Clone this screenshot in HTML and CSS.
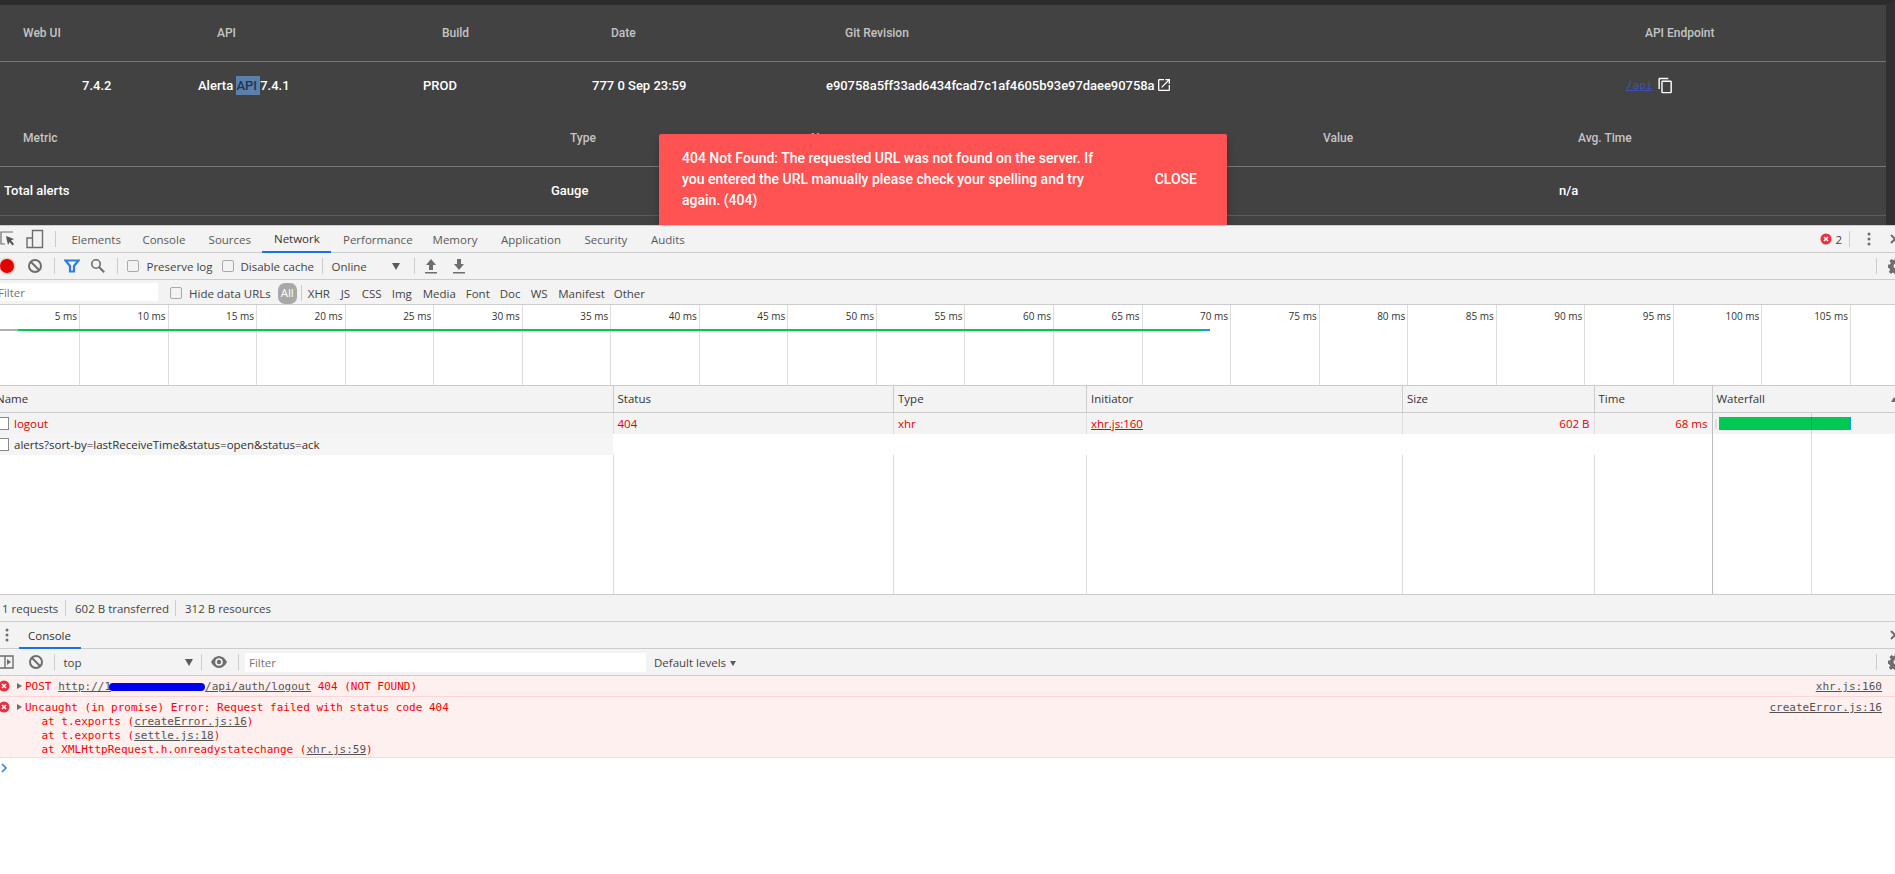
FILE: index.html
```html
<!DOCTYPE html>
<html lang="en">
  <head>
    <meta charset="UTF-8" />
    <meta name="viewport" content="width=device-width, initial-scale=1.0" />
    <title>Alerta About</title>
    <link rel="stylesheet" href="styles.css">
  </head>
  <body>
    <svg class="sprites" width="0" height="0">
      <symbol id="i-clear" viewBox="0 0 16 16">
        <circle cx="8" cy="8" r="6" fill="none" stroke="#6e6e6e" stroke-width="2" />
        <path d="M4 4l8 8" stroke="#6e6e6e" stroke-width="2" />
      </symbol>
      <symbol id="i-error" viewBox="0 0 12 12">
        <circle cx="6" cy="6" r="5.5" fill="#e8303f" />
        <path d="M4 4l4 4M8 4l-4 4" stroke="#fff" stroke-width="1.5" />
      </symbol>
      <symbol id="i-kebab" viewBox="0 0 6 16">
        <circle cx="3" cy="3" r="1.5" fill="#6e6e6e" />
        <circle cx="3" cy="8" r="1.5" fill="#6e6e6e" />
        <circle cx="3" cy="13" r="1.5" fill="#6e6e6e" />
      </symbol>
      <symbol id="i-gear" viewBox="0 0 16 16">
        <path fill="#6e6e6e" fill-rule="evenodd" d="M6.5 0h3l.4 2.2 1.3.6L13.1 1.5l2.1 2.1-1.3 1.9.6 1.3 2.2.4v3l-2.2.4-.6 1.3 1.3 1.9-2.1 2.1-1.9-1.3-1.3.6-.4 2.2h-3l-.4-2.2-1.3-.6-1.9 1.3-2.1-2.1 1.3-1.9-.6-1.3L0 9.700v-3l2.200-.4.6-1.300-1.300-1.900 2.100-2.100 1.900 1.300 1.300-.6zM8 5.500a2.500 2.500 0 1 0 0 5 2.500 2.500 0 0 0 0-5z" />
      </symbol>
      <symbol id="i-close" viewBox="0 0 10 10">
        <path d="M1 1l8 8M9 1l-8 8" stroke="#6e6e6e" stroke-width="2" fill="none" />
      </symbol>
    </svg>

    <main class="app">
      <div class="about-grid about-head">
        <div>Web UI</div>
        <div>API</div>
        <div>Build</div>
        <div>Date</div>
        <div>Git Revision</div>
        <div>API Endpoint</div>
      </div>
      <div class="about-grid about-row">
        <div class="first-value">7.4.2</div>
        <div>Alerta <span class="selected">API </span>7.4.1</div>
        <div>PROD</div>
        <div>777 0 Sep 23:59</div>
        <div class="with-icon">
          <span class="hash">e90758a5ff33ad6434fcad7c1af4605b93e97daee90758a</span>
          <svg class="md-icon" width="16" height="16" viewBox="0 0 24 24"><path fill="#fff" d="M14 3v2h3.590l-9.830 9.830 1.410 1.410L19 6.410V10h2V3M19 19H5V5h7V3H5a2 2 0 0 0-2 2v14a2 2 0 0 0 2 2h14a2 2 0 0 0 2-2v-7h-2v7z" /></svg>
        </div>
        <div class="with-icon">
          <a class="api-link" href="#">/api</a>
          <svg class="copy-icon" width="17" height="17" viewBox="0 0 24 24"><path fill="#fff" d="M16 1H4c-1.100 0-2 .9-2 2v14h2V3h12V1zm3 4H8c-1.100 0-2 .9-2 2v14c0 1.100.9 2 2 2h11c1.100 0 2-.9 2-2V7c0-1.100-.9-2-2-2zm0 16H8V7h11v14z" /></svg>
        </div>
      </div>

      <div class="metric-grid metric-head">
        <div>Metric</div>
        <div>Type</div>
        <div>Name</div>
        <div>Value</div>
        <div>Avg. Time</div>
      </div>
      <div class="metric-grid metric-row">
        <div>Total alerts</div>
        <div>Gauge</div>
        <div></div>
        <div></div>
        <div>n/a</div>
      </div>

      <div class="snackbar">
        <div class="snackbar-text">404 Not Found: The requested URL was not found on the server. If you entered the URL manually please check your spelling and try again. (404)</div>
        <div class="snackbar-close">CLOSE</div>
      </div>
    </main>

    <section class="devtools">
      <div class="tabbar">
        <svg class="inspect" width="16" height="16" viewBox="0 0 16 16">
          <path d="M13 1H1v12h4" fill="none" stroke="#6e6e6e" stroke-width="1.200" />
          <path d="M6 5l8 3-3 1.500 3 3.500-1.500 1.500-3-3.500L8 14z" fill="#555" />
        </svg>
        <svg class="device" width="18" height="20" viewBox="0 0 18 20">
          <path d="M6.500 1.500h10v17h-10zM1 9h5.500v9.500H1z" fill="none" stroke="#6e6e6e" stroke-width="1.400" />
        </svg>
        <span class="sep"></span>
        <div class="tabs">
          <span class="tab">Elements</span>
          <span class="tab">Console</span>
          <span class="tab">Sources</span>
          <span class="tab active">Network</span>
          <span class="tab">Performance</span>
          <span class="tab">Memory</span>
          <span class="tab">Application</span>
          <span class="tab">Security</span>
          <span class="tab">Audits</span>
        </div>
        <div class="tabbar-right">
          <svg width="12" height="12"><use href="#i-error" /></svg>
          <span class="err-count">2</span>
          <span class="sep"></span>
          <svg class="kebab" width="6" height="16"><use href="#i-kebab" /></svg>
          <svg class="close" width="10" height="10"><use href="#i-close" /></svg>
        </div>
      </div>

      <div class="net-toolbar">
        <span class="record"></span>
        <svg width="16" height="16"><use href="#i-clear" /></svg>
        <span class="sep"></span>
        <svg width="16" height="16" viewBox="0 0 16 16"><path d="M1.500 2.500h13L10 8v5.500H6V8z" fill="none" stroke="#2a7de1" stroke-width="2.200" /></svg>
        <svg width="16" height="16" viewBox="0 0 16 16"><circle cx="6" cy="6" r="4.200" fill="none" stroke="#6e6e6e" stroke-width="1.600" /><path d="M9.200 9.200l5 5" stroke="#6e6e6e" stroke-width="2" /></svg>
        <span class="sep"></span>
        <span class="check"></span>
        <span>Preserve log</span>
        <span class="check"></span>
        <span>Disable cache</span>
        <span class="sep"></span>
        <span>Online</span>
        <span class="caret"></span>
        <span class="sep"></span>
        <svg width="14" height="16" viewBox="0 0 14 16"><path d="M7 1l5 6H9v5H5V7H2zM1 14h12v1.500H1z" fill="#6e6e6e" /></svg>
        <svg width="14" height="16" viewBox="0 0 14 16"><path d="M7 12l5-6H9V1H5v5H2zM1 14h12v1.500H1z" fill="#6e6e6e" /></svg>
        <span></span>
        <span class="sep"></span>
        <svg class="gear" width="16" height="16"><use href="#i-gear" /></svg>
      </div>

      <div class="filter-bar">
        <div class="filter-input">Filter</div>
        <span class="check"></span>
        <span>Hide data URLs</span>
        <span class="pill">All</span>
        <span class="sep"></span>
        <div class="type-list">
          <span>XHR</span>
          <span>JS</span>
          <span>CSS</span>
          <span>Img</span>
          <span>Media</span>
          <span>Font</span>
          <span>Doc</span>
          <span>WS</span>
          <span>Manifest</span>
          <span>Other</span>
        </div>
      </div>

      <div class="timeline">
        <div class="tick first">5 ms</div>
        <div class="tick">10 ms</div>
        <div class="tick">15 ms</div>
        <div class="tick">20 ms</div>
        <div class="tick">25 ms</div>
        <div class="tick">30 ms</div>
        <div class="tick">35 ms</div>
        <div class="tick">40 ms</div>
        <div class="tick">45 ms</div>
        <div class="tick">50 ms</div>
        <div class="tick">55 ms</div>
        <div class="tick">60 ms</div>
        <div class="tick">65 ms</div>
        <div class="tick">70 ms</div>
        <div class="tick">75 ms</div>
        <div class="tick">80 ms</div>
        <div class="tick">85 ms</div>
        <div class="tick">90 ms</div>
        <div class="tick">95 ms</div>
        <div class="tick">100 ms</div>
        <div class="tick">105 ms</div>
        <div class="overview-bar">
          <span class="bar-wait"></span>
          <span class="bar-green"></span>
          <span class="bar-blue"></span>
        </div>
      </div>

      <div class="net-table">
        <div class="net-cols net-head">
          <div class="col-name">Name</div>
          <div>Status</div>
          <div>Type</div>
          <div>Initiator</div>
          <div>Size</div>
          <div>Time</div>
          <div>Waterfall<span class="sort-arrow"></span></div>
        </div>
        <div class="net-cols net-row failed">
          <div class="col-name"><span class="file-icon"></span>logout</div>
          <div>404</div>
          <div>xhr</div>
          <div><u>xhr.js:160</u></div>
          <div class="num">602 B</div>
          <div class="num">68 ms</div>
          <div class="waterfall"><span class="wf-wait"></span><span class="wf-green"></span><span class="wf-blue"></span></div>
        </div>
        <div class="net-cols net-row plain">
          <div class="col-name"><span class="file-icon"></span>alerts?sort-by=lastReceiveTime&amp;status=open&amp;status=ack</div>
          <div></div>
          <div></div>
          <div></div>
          <div></div>
          <div></div>
          <div class="waterfall"></div>
        </div>
        <div class="net-cols net-fill">
          <div class="col-name"></div>
          <div></div>
          <div></div>
          <div></div>
          <div></div>
          <div></div>
          <div class="waterfall"></div>
        </div>
      </div>

      <div class="status-bar">
        <span class="status-first">1 requests</span>
        <span class="sep"></span>
        <span>602 B transferred</span>
        <span class="sep"></span>
        <span>312 B resources</span>
      </div>

      <div class="drawer-tabs">
        <svg class="kebab" width="6" height="16"><use href="#i-kebab" /></svg>
        <span class="tab active drawer-tab">Console</span>
        <svg class="close" width="10" height="10"><use href="#i-close" /></svg>
      </div>

      <div class="console-toolbar">
        <svg width="14" height="14" viewBox="0 0 14 14"><path d="M-1 1h14v12H-1zM5 1v12" fill="none" stroke="#6e6e6e" stroke-width="1.400" /><path d="M7 4l4 3-4 3z" fill="#6e6e6e" /></svg>
        <svg width="16" height="16"><use href="#i-clear" /></svg>
        <span class="sep"></span>
        <span>top</span>
        <span class="caret"></span>
        <span class="sep"></span>
        <svg width="16" height="12" viewBox="0 0 16 12"><path d="M0 6c2-4 5-6 8-6s6 2 8 6c-2 4-5 6-8 6s-6-2-8-6z" fill="#6e6e6e" /><circle cx="8" cy="6" r="3.800" fill="#f3f3f3" /><circle cx="8" cy="6" r="2.200" fill="#6e6e6e" /></svg>
        <span class="sep"></span>
        <div class="console-filter">Filter</div>
        <span class="levels">Default levels<span class="caret small"></span></span>
        <span class="sep"></span>
        <svg class="gear" width="16" height="16"><use href="#i-gear" /></svg>
      </div>

      <div class="console">
        <div class="msg msg-one">
          <svg class="msg-icon" width="12" height="12"><use href="#i-error" /></svg>
          <span class="expand"></span>
          <div>POST <u class="src">http://1<span class="redact"></span>/api/auth/logout</u> 404 (NOT FOUND)</div>
          <u class="src msg-src">xhr.js:160</u>
        </div>
        <div class="msg msg-two">
          <svg class="msg-icon" width="12" height="12"><use href="#i-error" /></svg>
          <span class="expand"></span>
          <div>
            <div>Uncaught (in promise) Error: Request failed with status code 404</div>
            <div class="trace">at t.exports (<u class="src">createError.js:16</u>)</div>
            <div class="trace">at t.exports (<u class="src">settle.js:18</u>)</div>
            <div class="trace">at XMLHttpRequest.h.onreadystatechange (<u class="src">xhr.js:59</u>)</div>
          </div>
          <u class="src msg-src">createError.js:16</u>
        </div>
        <svg class="prompt" width="8" height="10" viewBox="0 0 8 10"><path d="M2 1l4 4-4 4" fill="none" stroke="#2a7de1" stroke-width="1.500" /></svg>
      </div>
    </section>
  </body>
</html>
```

FILE: styles.css
```css
* {
  box-sizing: border-box;
}

html,
body {
  height: 874px;
  margin: 0;
  overflow: hidden;
  background-color: #ffffff;
}

body {
  font-family: "Open Sans", Arial, sans-serif;
}

.sprites {
  position: absolute;
}

/* top app area */
.app {
  position: relative;
  height: 225px;
  overflow: hidden;
  background-color: #424242;
  border-top: 5px solid #2c2c2c;
  border-right: 9px solid #303030;
  font-family: Roboto, Arial, sans-serif;
  font-size: 13px;
  font-weight: 500;
  color: #ffffff;
}

.about-grid {
  display: grid;
  grid-template-columns: 194px 225px 169px 234px 800px 1fr;
  align-items: center;
}

.metric-grid {
  display: grid;
  grid-template-columns: 547px 241px 512px 255px 1fr;
  align-items: center;
}

.about-head,
.metric-head {
  padding-left: 23px;
  font-size: 12px;
  color: rgba(255, 255, 255, 0.7);
  border-bottom: 1px solid #777777;
}

.about-head {
  height: 57px;
}

.about-row {
  height: 48px;
  padding-left: 4px;
  padding-bottom: 2px;
}

.first-value {
  padding-left: 78px;
}

.metric-head {
  height: 57px;
}

.metric-row {
  height: 49px;
  padding-left: 4px;
  padding-bottom: 2px;
  border-bottom: 1px solid #5c5c5c;
}

.selected {
  background-color: #5b80ac;
  color: #1d3557;
  padding: 2px 0;
}

.with-icon {
  display: flex;
  align-items: center;
}

.hash {
  letter-spacing: -0.04px;
}

.md-icon {
  margin-left: 1px;
}

.api-link {
  font-family: "DejaVu Sans Mono", monospace;
  font-size: 11px;
  font-weight: 400;
  color: #3f51b5;
}

.copy-icon {
  margin-left: 4px;
}

.snackbar {
  position: absolute;
  left: 659px;
  top: 129px;
  width: 568px;
  height: 96px;
  display: flex;
  justify-content: space-between;
  padding: 14px 30px 14px 23px;
  background-color: #ff5252;
  border-radius: 2px;
  box-shadow: 0 3px 5px -1px rgba(0, 0, 0, 0.2), 0 6px 10px 0 rgba(0, 0, 0, 0.14);
  font-size: 14px;
  line-height: 21px;
}

.snackbar-text {
  width: 416px;
}

.snackbar-close {
  align-self: center;
  margin-top: -5px;
}

/* devtools */
.devtools {
  height: 649px;
  display: flex;
  flex-direction: column;
  font-size: 11.5px;
  color: #444444;
}

.sep {
  display: block;
  width: 1px;
  height: 16px;
  background-color: #cccccc;
}

.tabbar,
.net-toolbar,
.filter-bar,
.status-bar,
.drawer-tabs,
.console-toolbar {
  display: flex;
  align-items: center;
  background-color: #f3f3f3;
  border-bottom: 1px solid #cccccc;
  flex: none;
}

.tabbar {
  height: 28px;
  border-top: 1px solid #cccccc;
}

.inspect {
  margin-right: 10px;
}

.device {
  margin-right: 11px;
}

.tabs {
  display: grid;
  grid-template-columns: 71px 66.200px 62.400px 72px 89.600px 68.400px 83.500px 66.500px auto;
  height: 100%;
  margin-left: 6.400px;
}

.tab {
  display: flex;
  align-items: center;
  height: 27px;
  padding-left: 9px;
  color: #5a5a5a;
}

.tab.active {
  width: 69px;
  color: #333333;
  border-bottom: 2px solid #1a73e8;
  padding-left: 12px;
}

.tabbar-right {
  display: flex;
  align-items: center;
  margin-left: auto;
}

.err-count {
  margin: 0 7px 0 3px;
}

.kebab {
  margin-left: 16px;
}

.close {
  margin: 0 -5px 0 18px;
}

.net-toolbar {
  display: grid;
  grid-template-columns: 27px 26.500px 10px 26px 27px 10px 20px 75px 19px 81px 10px 60px 22px 10px 28px 20px 1fr 12px 7px;
  height: 27px;
}

.record {
  width: 14px;
  height: 14px;
  border-radius: 50%;
  background-color: #e00000;
  box-shadow: 0 0 2px 1px rgba(238, 0, 0, 0.25);
}

.check {
  display: block;
  width: 12px;
  height: 12px;
  background-color: #f3f3f3;
  border: 1px solid #a9a9a9;
  border-radius: 2px;
}

.caret {
  width: 0;
  height: 0;
  border-left: 4px solid transparent;
  border-right: 4px solid transparent;
  border-top: 7px solid #5a5a5a;
}

.caret.small {
  display: inline-block;
  margin-left: 4px;
  vertical-align: 1px;
  border-left-width: 3.500px;
  border-right-width: 3.500px;
  border-top-width: 5px;
}

.gear {
  justify-self: start;
}

.filter-bar {
  height: 25px;
  padding-top: 2px;
}

.filter-input {
  width: 158px;
  height: 18px;
  margin: -2px 12px 0 0;
  line-height: 20px;
  text-indent: -2px;
  background-color: #ffffff;
  color: #757575;
}

.filter-bar > .check {
  margin: 0 7px 0 0;
}

.pill {
  width: 19px;
  height: 21px;
  margin: 0 4px 0 7px;
  border-radius: 7px;
  background-color: #a8a8a8;
  color: #ffffff;
  text-align: center;
  line-height: 20px;
}

.type-list {
  display: grid;
  grid-template-columns: 33px 21px 30px 31px 43px 34px 31px 27.500px 55.500px auto;
  margin-left: 6px;
}

/* overview */
.timeline {
  position: relative;
  display: flex;
  height: 81px;
  flex: none;
  border-bottom: 1px solid #cccccc;
  font-size: 10px;
  color: #333333;
}

.tick {
  width: 88.550px;
  flex: none;
  padding: 4px 2px 0 0;
  text-align: right;
  border-right: 1px solid #dddddd;
}

.tick.first {
  width: 80px;
}

.overview-bar {
  position: absolute;
  left: 0;
  top: 24px;
  display: flex;
  height: 2px;
}

.bar-wait {
  width: 18px;
  background-color: #b0b0b0;
}

.bar-green {
  width: 1184px;
  background-color: #00c853;
}

.bar-blue {
  width: 8px;
  background-color: #0b9ff0;
}

/* request table */
.net-table {
  display: flex;
  flex-direction: column;
  height: 208px;
  flex: none;
}

.net-cols {
  display: grid;
  grid-template-columns: 612.500px 280.500px 193px 316px 191.500px 118px 1fr;
}

.net-cols > div {
  border-left: 1px solid #dddddd;
  padding: 0 4px;
  white-space: nowrap;
}

.net-cols > .col-name {
  border-left: none;
  padding-left: 0;
}

.net-head {
  height: 27px;
  line-height: 26px;
  background-color: #f3f3f3;
  border-bottom: 1px solid #cccccc;
  color: #333333;
}

.net-head > .col-name {
  text-indent: -4px;
}

.net-head > div {
  border-left-color: #cccccc;
}

.sort-arrow {
  position: absolute;
  right: -2px;
  top: 397px;
  width: 0;
  height: 0;
  border-left: 3px solid transparent;
  border-right: 3px solid transparent;
  border-bottom: 5px solid #6e6e6e;
}

.net-row {
  height: 21px;
  line-height: 21px;
  color: #303030;
}

.failed {
  background-color: #f3f3f3;
  color: #e00000;
}

.plain > .col-name {
  background-color: #f5f5f5;
}

.plain > div:not(.col-name):not(.waterfall) {
  border-left: none;
}

.file-icon {
  display: inline-block;
  width: 9px;
  height: 13px;
  margin-right: 5px;
  vertical-align: -2px;
  background-color: #ffffff;
  border: 1px solid #8a8a8a;
  border-left: none;
}

.num {
  text-align: right;
}

.net-fill {
  flex: 1;
}

.net-cols > .waterfall {
  position: relative;
  display: flex;
  align-items: center;
  border-left: 1px solid #bdbdbd;
  padding: 0;
}

.waterfall::after {
  content: "";
  position: absolute;
  left: 98px;
  top: 0;
  bottom: 0;
  width: 1px;
  background-color: rgba(0, 0, 0, 0.13);
}

.wf-wait {
  width: 2px;
  height: 10px;
  margin: 0 2px 0 2px;
  background-color: #dddddd;
}

.wf-green {
  width: 130px;
  height: 13px;
  background-color: #00c853;
}

.wf-blue {
  width: 2px;
  height: 13px;
  background-color: #0b9ff0;
}

/* status bar and console */
.status-bar {
  height: 28px;
  border-top: 1px solid #cccccc;
}

.status-first {
  margin-left: 2px;
  width: 63px;
}

.status-bar > span:nth-child(3) {
  width: 109px;
  padding-left: 9px;
}

.status-bar > span:nth-child(5) {
  padding-left: 9px;
}

.drawer-tabs {
  height: 27px;
}

.drawer-tabs .kebab {
  margin-left: 4px;
}

.drawer-tab {
  margin-left: 9px;
  padding-top: 2px;
}

.tab.drawer-tab {
  width: 62px;
  padding-left: 9px;
}

.drawer-tabs .close {
  margin-left: auto;
}

.console-toolbar {
  display: grid;
  grid-template-columns: 28px 25.500px 10px 121px 16px 10px 27px 7.500px 401px 1fr 12px 7px;
  height: 27px;
}

.console-filter {
  height: 19px;
  line-height: 19px;
  padding-left: 4px;
  background-color: #ffffff;
  color: #757575;
}

.levels {
  padding-left: 8px;
}

.console {
  position: relative;
  flex: 1;
  font-family: "DejaVu Sans Mono", monospace;
  font-size: 11px;
  line-height: 14px;
  color: #ff0000;
}

.msg {
  position: relative;
  display: flex;
  background-color: #fff0f0;
  border-bottom: 1px solid #ffd6d6;
  padding-left: 25px;
}

.msg-one {
  height: 21px;
  padding-top: 4px;
}

.msg-two {
  height: 61px;
  padding-top: 4px;
}

.trace {
  padding-left: 16.500px;
}

.msg-icon {
  position: absolute;
  left: -2px;
  top: 4px;
}

.expand {
  position: absolute;
  left: 17px;
  top: 7px;
  width: 0;
  height: 0;
  border-top: 3.500px solid transparent;
  border-bottom: 3.500px solid transparent;
  border-left: 5px solid #6e6e6e;
}

.src {
  color: #545454;
}

.msg-src {
  margin-left: auto;
  margin-right: 13px;
}

.redact {
  display: inline-block;
  width: 96px;
  height: 8px;
  margin-left: -2px;
  border-radius: 4px;
  background-color: #0000f0;
  vertical-align: -1px;
}

.prompt {
  margin: 5px 0 0 0;
  display: block;
}
```
